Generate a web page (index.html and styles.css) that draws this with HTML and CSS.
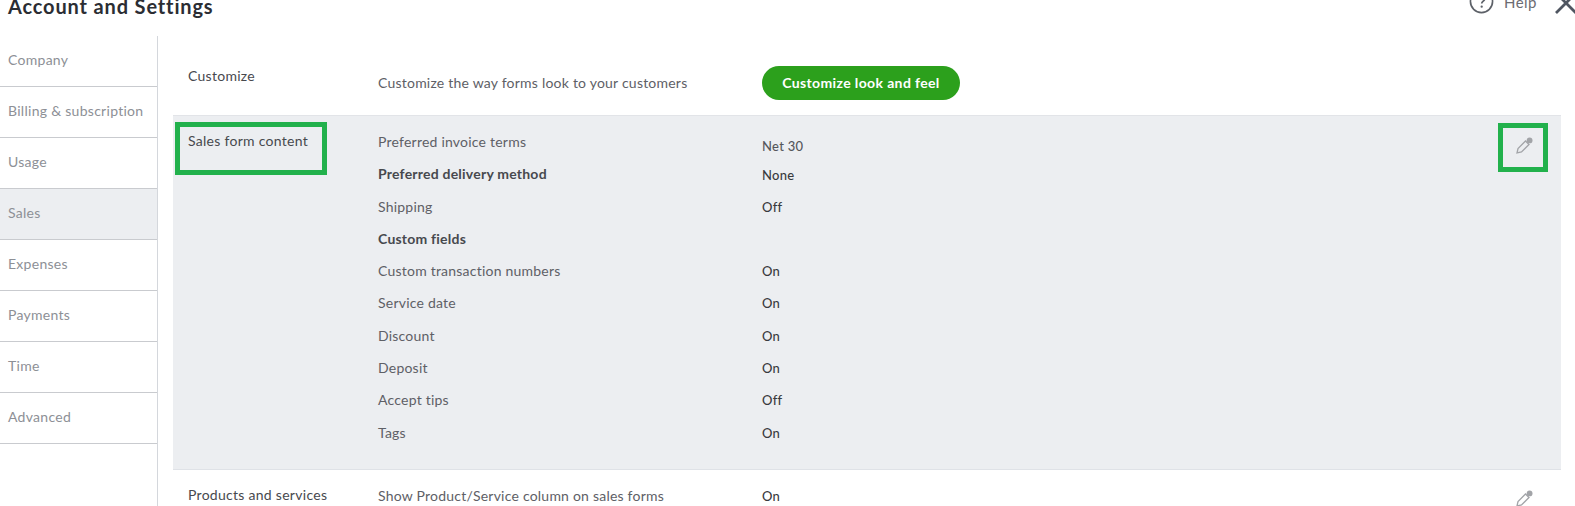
FILE: index.html
```html
<!DOCTYPE html>
<html lang="en">
<head>
<meta charset="utf-8">
<title>Account and Settings</title>
<link rel="stylesheet" href="styles.css">
</head>
<body>
<header class="top">
  <h1 class="title">Account and Settings</h1>
  <div class="top-actions">
    <svg class="help-icon" width="25" height="25" viewBox="0 0 26 26"><circle cx="13" cy="13" r="11.5" fill="none" stroke="#5d6168" stroke-width="1.7"/><path d="M9.6 10.2c0-2 1.5-3.2 3.4-3.2s3.400 1.200 3.400 3c0 2.600-3.200 2.700-3.200 5.200" fill="none" stroke="#5d6168" stroke-width="1.800"/><circle cx="13.200" cy="18.400" r="1.200" fill="#5d6168"/></svg>
    <span class="help-label">Help</span>
    <svg class="close-icon" width="24" height="24" viewBox="0 0 24 24"><path d="M2 2l20 20M22 2L2 22" stroke="#4f5661" stroke-width="2.800" fill="none"/></svg>
  </div>
</header>
<div class="body">
  <nav class="side">
    <a class="side-item">Company</a>
    <a class="side-item">Billing &amp; subscription</a>
    <a class="side-item">Usage</a>
    <a class="side-item active">Sales</a>
    <a class="side-item">Expenses</a>
    <a class="side-item">Payments</a>
    <a class="side-item">Time</a>
    <a class="side-item">Advanced</a>
  </nav>
  <main class="content">
    <section class="sec sec-customize">
      <div class="sec-name">Customize</div>
      <div class="cust-text">Customize the way forms look to your customers</div>
      <button class="cta">Customize look and feel</button>
    </section>
    <section class="sec sec-sales">
      <div class="sec-name">Sales form content</div>
      <div class="rows">
        <div class="row"><span class="key">Preferred invoice terms</span><span class="val val-low">Net 30</span></div>
        <div class="row"><span class="key strong">Preferred delivery method</span><span class="val val-nudge">None</span></div>
        <div class="row"><span class="key">Shipping</span><span class="val">Off</span></div>
        <div class="row"><span class="key strong">Custom fields</span></div>
        <div class="row"><span class="key">Custom transaction numbers</span><span class="val">On</span></div>
        <div class="row"><span class="key">Service date</span><span class="val">On</span></div>
        <div class="row"><span class="key">Discount</span><span class="val">On</span></div>
        <div class="row"><span class="key">Deposit</span><span class="val">On</span></div>
        <div class="row"><span class="key">Accept tips</span><span class="val">Off</span></div>
        <div class="row"><span class="key">Tags</span><span class="val">On</span></div>
      </div>
      <svg class="pencil" width="17" height="17" viewBox="0 0 17 17"><path d="M1 16l1-4.500 7.500-7.500 3.500 3.500-7.500 7.500z" fill="none" stroke="#a2a4a8" stroke-width="1.300"/><circle cx="13.600" cy="3.400" r="2.900" fill="#a2a4a8"/></svg>
      <div class="mark mark-label"></div>
      <div class="mark mark-pencil"></div>
    </section>
    <section class="sec sec-products">
      <div class="sec-name">Products and services</div>
      <div class="rows">
        <div class="row"><span class="key">Show Product/Service column on sales forms</span><span class="val">On</span></div>
      </div>
      <svg class="pencil" width="17" height="17" viewBox="0 0 17 17"><path d="M1 16l1-4.500 7.500-7.500 3.500 3.500-7.500 7.500z" fill="none" stroke="#a2a4a8" stroke-width="1.300"/><circle cx="13.600" cy="3.400" r="2.900" fill="#a2a4a8"/></svg>
    </section>
  </main>
</div>
</body>
</html>
```

FILE: styles.css
```css
* { box-sizing: border-box; }
html, body { margin: 0; height: 506px; overflow: hidden; background: #fff; }
body { font-family: Lato, "Open Sans", sans-serif; font-size: 14px; color: #393a3d; letter-spacing: 0.28px; }

.top { height: 36px; display: flex; justify-content: space-between; padding-left: 8px; overflow: hidden; }
.title { margin: -7px 0 0; font-size: 20px; font-weight: 700; line-height: 26px; color: #2b2d33; letter-spacing: 0.85px; }
.top-actions { display: flex; align-items: flex-start; margin-top: -11px; margin-right: -3px; }
.help-label { margin: 5px 0 0 10px; font-size: 15px; color: #6b6c72; line-height: 16px; letter-spacing: 0.5px; }
.close-icon { margin: 2px 0 0 17px; }

.body { display: flex; height: 470px; }
.side { width: 158px; flex: none; border-right: 1px solid #d4d7dc; }
.side-item { display: flex; align-items: center; height: 51px; padding: 0 0 3px 8px; border-bottom: 1px solid #c9cbcf; color: #8d9096; }
.side-item.active { background: #eceef1; }

.content { flex: 1; margin: 0 14px 0 15px; min-width: 0; }
.sec { position: relative; display: flex; }
.sec-name { width: 205px; flex: none; padding-left: 15px; line-height: 18px; color: #47494e; }

.sec-customize { height: 79px; }
.sec-customize .sec-name { padding-top: 31px; }
.cust-text { width: 384px; flex: none; padding-top: 38px; line-height: 18px; color: #5e6066; letter-spacing: 0.22px; }
.cta { margin-top: 30px; width: 198px; height: 34px; padding: 0 0 2px; border: 0; border-radius: 17px; background: #2ca01c; color: #fff; font: 700 14px Lato, sans-serif; letter-spacing: 0.37px; }

.sec-sales { height: 355px; background: #eceef1; border-top: 1px solid #e2e4e8; border-bottom: 1px solid #dfe2e7; padding-top: 16px; }
.rows { flex: 1; }
.row { display: flex; height: 32.3px; line-height: 20px; }
.key { width: 384px; flex: none; color: #5e6066; letter-spacing: 0.22px; }
.key.strong { font-weight: 700; color: #47494e; }
.val { font-size: 13px; font-weight: 500; color: #393a3d; }
.val-low { position: relative; top: 4px; color: #55575c; }
.val-nudge { position: relative; top: 1px; }

.pencil { position: absolute; right: 28px; top: 21px; }
.sec-products .pencil { top: 20px; }
.mark { position: absolute; border: 5px solid #22b14c; }
.mark-label { left: 2px; top: 6px; width: 152px; height: 53px; }
.mark-pencil { right: 13px; top: 7px; width: 50px; height: 49px; }

.sec-products { padding-top: 16px; }
```
